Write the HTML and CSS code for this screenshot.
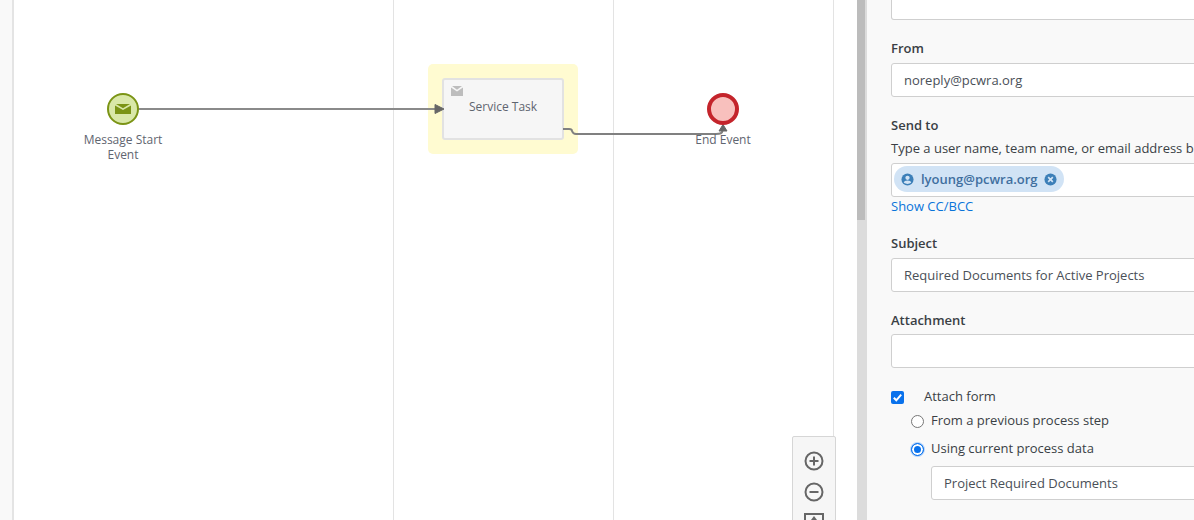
FILE: index.html
```html
<!DOCTYPE html>
<html lang="en">

<head>
    <meta charset="UTF-8">
    <title>Process Modeler</title>
    <link rel="stylesheet" href="styles.css">
</head>

<body>
    <div class="layout">
        <div class="side-strip"></div>
        <div class="canvas">
            <div class="lane-line line-a"></div>
            <div class="lane-line line-b"></div>
            <div class="lane-line line-c"></div>

            <svg class="flows" viewBox="0 0 844 520">
                <path d="M125,109 H424" stroke="#8a8a8a" stroke-width="2" fill="none"></path>
                <path d="M422,104.500 L431,109 422,113.500 Z" fill="#666" stroke="#666"></path>
                <path d="M550,129 H556 Q559,129 559,131 Q560,134 563,134 H703 Q709,134 709.500,131" stroke="#808080" stroke-width="2" fill="none"></path>
                <path d="M706,131 L710,124.500 714,131 Z" fill="#666" stroke="#666"></path>
            </svg>

            <div class="event start-event">
                <svg viewBox="0 0 16 10" class="mail-icon">
                    <path d="M0,1.500 L8,6 16,1.500 V10 H0 Z M1,0 H15 L8,4.200 Z" fill="#7b9415"></path>
                </svg>
            </div>
            <div class="node-label start-label">Message Start<br>Event</div>

            <div class="highlight">
                <div class="task">
                    <svg viewBox="0 0 12 10" class="task-icon">
                        <path d="M0,1.500 L6,5.500 12,1.500 V10 H0 Z M1,0 H11 L6,3.800 Z" fill="#bdbdbd"></path>
                    </svg>
                    <div class="task-name">Service Task</div>
                </div>
            </div>

            <div class="event end-event"></div>
            <div class="node-label end-label">End Event</div>

            <div class="zoom-box">
                <svg viewBox="0 0 20 20" class="zoom-icon">
                    <circle cx="10" cy="10" r="8.500" stroke="#666" stroke-width="2" fill="none"></circle>
                    <path d="M5.500,10 H14.500 M10,5.500 V14.500" stroke="#666" stroke-width="2" fill="none"></path>
                </svg>
                <svg viewBox="0 0 20 20" class="zoom-icon">
                    <circle cx="10" cy="10" r="8.500" stroke="#666" stroke-width="2" fill="none"></circle>
                    <path d="M5.500,10 H14.500" stroke="#666" stroke-width="2" fill="none"></path>
                </svg>
                <svg viewBox="0 0 20 20" class="zoom-icon">
                    <rect x="1" y="1" width="18" height="18" stroke="#666" stroke-width="2" fill="none"></rect>
                    <path d="M10,3 L13,7 H7 Z" fill="#666"></path>
                </svg>
            </div>
        </div>

        <div class="scroll-track">
            <div class="scroll-thumb"></div>
        </div>

        <div class="panel">
            <div class="input input-cut"></div>

            <label class="field-label label-from">From</label>
            <div class="input">noreply@pcwra.org</div>

            <label class="field-label label-send">Send to</label>
            <div class="hint">Type a user name, team name, or email address below</div>
            <div class="input tag-input">
                <span class="tag">
                    <svg viewBox="0 0 14 14" class="tag-icon">
                        <circle cx="7" cy="7" r="6.500" fill="#3c7fb8"></circle>
                        <circle cx="7" cy="5.200" r="2.300" fill="#d1e3f5"></circle>
                        <path d="M3,10.500 Q3.500,8 7,8 Q10.500,8 11,10.500 Q7,13 3,10.500 Z" fill="#d1e3f5"></path>
                    </svg>
                    <span class="tag-text">lyoung@pcwra.org</span>
                    <svg viewBox="0 0 14 14" class="tag-icon">
                        <circle cx="7" cy="7" r="6.500" fill="#3c7fb8"></circle>
                        <path d="M4.500,4.500 L9.500,9.500 M9.500,4.500 L4.500,9.500" stroke="#d1e3f5" stroke-width="1.800"></path>
                    </svg>
                </span>
            </div>
            <a class="cc-link">Show CC/BCC</a>

            <label class="field-label label-subject">Subject</label>
            <div class="input">Required Documents for Active Projects</div>

            <label class="field-label label-attach">Attachment</label>
            <div class="input"></div>

            <div class="check-row">
                <span class="checkbox">
                    <svg viewBox="0 0 13 13">
                        <path d="M2.800,6.800 L5.300,9.300 10.200,3.700" stroke="#fff" stroke-width="2" fill="none"></path>
                    </svg>
                </span>
                <span class="option-text">Attach form</span>
            </div>
            <div class="radio-row radio-first">
                <span class="radio"></span>
                <span class="option-text">From a previous process step</span>
            </div>
            <div class="radio-row">
                <span class="radio radio-on"></span>
                <span class="option-text">Using current process data</span>
            </div>
            <div class="input input-nested">Project Required Documents</div>
        </div>
    </div>
</body>

</html>
```

FILE: styles.css
```css
* {
    font-family: "Open Sans", sans-serif;
    box-sizing: border-box;
}

html,
body {
    width: 100%;
    height: 100%;
    margin: 0;
    padding: 0;
    overflow: hidden;
    background: #fff;
}

.layout {
    display: flex;
    width: 1194px;
    height: 520px;
    overflow: hidden;
}

.side-strip {
    flex: 0 0 13px;
    background: #f9f9f9;
    border-right: 1px solid #e4e4e4;
}

/* diagram */
.canvas {
    position: relative;
    flex: 0 0 844px;
    height: 520px;
    background: #fff;
    box-shadow: inset 1px 0 0 #e4e4e4;
}

.lane-line {
    position: absolute;
    top: 0;
    width: 1px;
    height: 100%;
    background: #e3e3e3;
}

.line-a {
    left: 380px;
}

.line-b {
    left: 600px;
}

.line-c {
    left: 820px;
}

.flows {
    position: absolute;
    left: 0;
    top: 0;
    width: 844px;
    height: 520px;
    z-index: 2;
}

.event {
    position: absolute;
    border-radius: 50%;
    z-index: 3;
}

.start-event {
    left: 94px;
    top: 93px;
    width: 32px;
    height: 32px;
    background: #d9e8a8;
    border: 2px solid #7b9415;
    display: flex;
    align-items: center;
    justify-content: center;
}

.mail-icon {
    width: 16px;
    height: 10px;
}

.end-event {
    left: 694px;
    top: 93px;
    width: 32px;
    height: 32px;
    background: #f8c0bd;
    border: 4px solid #c4242b;
}

.node-label {
    position: absolute;
    font-size: 12px;
    line-height: 15px;
    color: #5f6570;
    text-align: center;
    white-space: nowrap;
}

.start-label {
    left: 50px;
    top: 132px;
    width: 120px;
}

.end-label {
    left: 650px;
    top: 132px;
    width: 120px;
    z-index: 3;
}

.highlight {
    position: absolute;
    left: 415px;
    top: 64px;
    width: 150px;
    height: 90px;
    padding: 14px;
    background: #fffbd1;
    border-radius: 5px;
}

.task {
    width: 122px;
    height: 62px;
    background: #f6f6f6;
    border: 2px solid #e2e2e2;
    border-radius: 3px;
    padding: 6px 7px;
}

.task-icon {
    display: block;
    width: 12px;
    height: 10px;
}

.task-name {
    font-size: 12px;
    line-height: 15px;
    color: #5f6570;
    text-align: center;
    margin: 3px -7px 0;
}

.zoom-box {
    position: absolute;
    left: 779px;
    top: 436px;
    width: 44px;
    height: 100px;
    background: #f6f6f6;
    border: 1px solid #d6d6d6;
    border-radius: 2px;
    padding: 14px 0 0 11px;
    display: flex;
    flex-direction: column;
    gap: 11px;
    z-index: 4;
}

.zoom-icon {
    width: 20px;
    height: 20px;
    flex: none;
}

/* scrollbar between canvas and panel */
.scroll-track {
    flex: 0 0 10px;
    background: #dcdcdc;
}

.scroll-thumb {
    width: 8px;
    height: 220px;
    background: #bcbcbc;
}

/* properties panel */
.panel {
    flex: 0 0 327px;
    height: 520px;
    background: #f9f9f9;
    padding-left: 24px;
    color: #3a3f45;
    font-size: 13px;
    overflow: hidden;
}

.input {
    width: 340px;
    height: 34px;
    background: #fff;
    border: 1px solid #cfcfcf;
    border-radius: 3px;
    padding: 0 12px;
    display: flex;
    align-items: center;
    font-size: 13px;
    color: #4a5058;
}

.input-cut {
    height: 20px;
    border-top: none;
    border-radius: 0 0 3px 3px;
}

.field-label {
    display: block;
    font-size: 13px;
    font-weight: 600;
    line-height: 18px;
    color: #3a3f45;
}

.label-from {
    margin-top: 19px;
    margin-bottom: 6px;
}

.label-send {
    margin-top: 19px;
    margin-bottom: 5px;
}

.label-subject {
    margin-top: 19px;
    margin-bottom: 6px;
}

.label-attach {
    margin-top: 19px;
    margin-bottom: 5px;
}

.hint {
    font-size: 13px;
    line-height: 18px;
    white-space: nowrap;
    margin-bottom: 6px;
}

.tag-input {
    padding: 0 2px 2px;
}

.tag {
    display: inline-flex;
    align-items: center;
    height: 26px;
    padding: 0 7px;
    background: #d1e3f5;
    border-radius: 13px;
    color: #3f6f9f;
    font-weight: 600;
    font-size: 13px;
}

.tag-icon {
    width: 13px;
    height: 13px;
    flex: none;
}

.tag-text {
    margin: 0 6px 0 7px;
}

.cc-link {
    display: block;
    font-size: 13px;
    line-height: 18px;
    color: #0a74d9;
}

.check-row {
    display: flex;
    align-items: center;
    gap: 20px;
    height: 18px;
    margin-top: 20px;
}

.option-text {
    margin-bottom: 2px;
}

.checkbox {
    width: 13px;
    height: 13px;
    background: #0a72ec;
    border-radius: 2px;
    flex: none;
}

.checkbox svg {
    display: block;
}

.radio-row {
    display: flex;
    align-items: center;
    gap: 7px;
    height: 18px;
    margin-top: 10px;
    margin-left: 20px;
}

.radio-first {
    margin-top: 6px;
}

.radio {
    width: 13px;
    height: 13px;
    background: #fff;
    border: 1px solid #777;
    border-radius: 50%;
    flex: none;
}

.radio-on {
    background: #0a72ec;
    border-color: #0a72ec;
    box-shadow: inset 0 0 0 2px #fff, 0 0 0 1px #b9d6fb;
}

.input-nested {
    margin-top: 8px;
    margin-left: 40px;
}
```
